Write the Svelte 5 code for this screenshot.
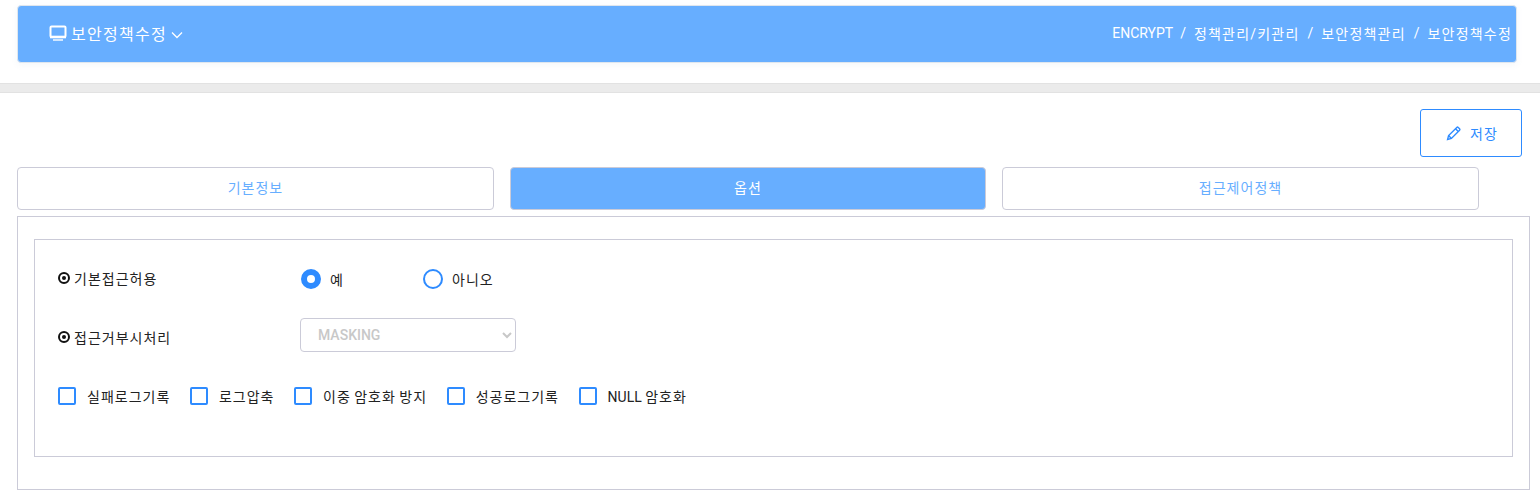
<script>
  const crumbs = ['정책관리/키관리', '보안정책관리', '보안정책수정'];
  const tabs = [
    { label: '기본정보', active: false },
    { label: '옵션', active: true },
    { label: '접근제어정책', active: false }
  ];
  const checks = ['실패로그기록', '로그압축', '이중 암호화 방지', '성공로그기록'];
</script>

<div class="page">
  <header class="head">
    <div class="title">
      <svg width="18" height="16" viewBox="0 0 18 16" fill="none" stroke="#fff">
        <rect x="1.5" y="1.5" width="15" height="10.5" rx="1" stroke-width="2"/>
        <path d="M4 15h10" stroke-width="1.4"/>
        <path d="M1 12h16" stroke-width="2.6"/>
      </svg>
      <span>보안정책수정</span>
      <svg class="chev" width="12" height="8" viewBox="0 0 12 8" fill="none" stroke="#fff" stroke-width="1.3"><path d="M1 1.5l5 5 5-5"/></svg>
    </div>
    <nav class="crumbs">
      <span class="latin">ENCRYPT</span>
      {#each crumbs as c}
        <span class="sep">/</span>
        <span>{c}</span>
      {/each}
    </nav>
  </header>

  <div class="divider"></div>

  <div class="actions">
    <button class="save">
      <svg width="16" height="16" viewBox="0 0 16 16" fill="none" stroke="#2e8bff" stroke-width="1.4">
        <path d="M1.6 14.4l1-3.8 8.2-8.2a1 1 0 0 1 1.4 0l1.4 1.4a1 1 0 0 1 0 1.4l-8.2 8.2z"/>
        <path d="M9.5 3.7l2.8 2.8M2.6 10.6l2.8 2.8"/>
      </svg>
      <span>저장</span>
    </button>
  </div>

  <div class="tabs">
    {#each tabs as t}
      <div class="tab" class:active={t.active}>{t.label}</div>
    {/each}
  </div>

  <section class="outer">
    <div class="inner">
      <div class="row r1">
        <div class="label"><span class="dot"></span>기본접근허용</div>
        <div class="radios">
          <label class="radio"><span class="rb on"></span>예</label>
          <label class="radio"><span class="rb"></span>아니오</label>
        </div>
      </div>
      <div class="row r2">
        <div class="label"><span class="dot"></span>접근거부시처리</div>
        <select class="sel" disabled><option>MASKING</option></select>
      </div>
      <div class="checks">
        {#each checks as c}
          <label class="check"><span class="cb"></span><span>{c}</span></label>
        {/each}
        <label class="check"><span class="cb"></span><span><span class="latin">NULL</span> 암호화</span></label>
      </div>
    </div>
  </section>
</div>

<style>
  :global(body) {
    margin: 0;
    background: #fff;
    font-family: Roboto, "Noto Sans CJK KR", sans-serif;
  }
  .page {
    height: 497px;
    overflow: hidden;
    padding-top: 5px;
    box-sizing: border-box;
  }
  .head {
    margin: 0 23px 0 17px;
    height: 58px;
    box-sizing: border-box;
    background: #67aeff;
    border: 1px solid #dfe6ee;
    border-radius: 4px;
    box-shadow: 0 2px 6px rgba(120, 150, 190, 0.08);
    display: flex;
    align-items: center;
    justify-content: space-between;
    padding: 0 4px 2px 31px;
    color: #fff;
  }
  .title {
    display: flex;
    align-items: center;
    font-size: 16px;
    letter-spacing: 1.3px;
    gap: 4px;
  }
  .chev { margin-top: 3px; }
  .crumbs {
    display: flex;
    align-items: center;
    font-size: 14px;
    letter-spacing: 1.2px;
    gap: 8px;
  }
  .latin { letter-spacing: 0; }
  .crumbs .latin { margin-right: -1px; }
  .sep { letter-spacing: 0; }
  .divider {
    margin-top: 20px;
    height: 8px;
    background: #ebebeb;
    border-top: 1px solid #e2e2e2;
    border-bottom: 1px solid #e2e2e2;
  }
  .actions {
    display: flex;
    justify-content: flex-end;
    padding: 16px 18px 0 0;
  }
  .save {
    width: 102px;
    height: 48px;
    background: #fff;
    border: 1px solid #2e8bff;
    border-radius: 3px;
    color: #2e8bff;
    font: inherit;
    font-size: 14px;
    letter-spacing: 1px;
    display: flex;
    align-items: center;
    justify-content: center;
    gap: 8px;
    padding: 0 0 0 2px;
  }
  .tabs {
    display: flex;
    gap: 16px;
    margin: 10px 0 0 17px;
  }
  .tab {
    width: 477px;
    height: 43px;
    box-sizing: border-box;
    border: 1px solid #cbcbd8;
    border-radius: 4px;
    color: #67aeff;
    font-size: 14px;
    letter-spacing: 1px;
    padding-bottom: 4px;
    display: flex;
    align-items: center;
    justify-content: center;
  }
  .tab.active {
    width: 476px;
    background: #67aeff;
    color: #fff;
  }
  .outer {
    margin: 6px 10px 0 17px;
    border: 1px solid #cbcbd8;
    height: 274px;
    box-sizing: border-box;
    padding: 22px 16px 0 16px;
  }
  .inner {
    border: 1px solid #cbcbd8;
    height: 218px;
    box-sizing: border-box;
    padding: 0 23px;
    color: #222;
    font-size: 14px;
    letter-spacing: 1px;
  }
  .row { display: flex; align-items: center; }
  .r1 { height: 30px; margin-top: 24px; }
  .r2 { height: 34px; margin-top: 24px; }
  .label {
    width: 243px;
    display: flex;
    align-items: center;
    gap: 4px;
  }
  .r2 .label { width: 242px; padding-top: 4px; }
  .r1 .label { padding-bottom: 3px; }
  .dot {
    width: 12px;
    height: 12px;
    box-sizing: border-box;
    border: 2px solid #111;
    border-radius: 50%;
    position: relative;
    flex: none;
  }
  .dot::after {
    content: "";
    position: absolute;
    left: 2px;
    top: 2px;
    width: 4px;
    height: 4px;
    border-radius: 50%;
    background: #111;
  }
  .radios { display: flex; }
  .radio {
    display: flex;
    align-items: center;
    gap: 9px;
    width: 122px;
  }
  .rb {
    width: 20px;
    height: 20px;
    box-sizing: border-box;
    border: 2px solid #2e8bff;
    border-radius: 50%;
    flex: none;
  }
  .rb.on { border-width: 6px; }
  .sel {
    width: 216px;
    height: 34px;
    box-sizing: border-box;
    background: #fff;
    border: 1px solid #cbcbd8;
    border-radius: 4px;
    color: #c8c8c8;
    font: inherit;
    font-size: 14px;
    font-weight: 500;
    letter-spacing: 0;
    padding: 0 13px;
    opacity: 1;
  }
  .checks {
    display: flex;
    margin-top: 35px;
    gap: 19.6px;
    word-spacing: -1px;
  }
  .check {
    display: flex;
    align-items: center;
    gap: 11px;
    height: 18px;
  }
  .cb {
    width: 18px;
    height: 18px;
    box-sizing: border-box;
    border: 2px solid #2e8bff;
    border-radius: 2px;
    flex: none;
  }
</style>
